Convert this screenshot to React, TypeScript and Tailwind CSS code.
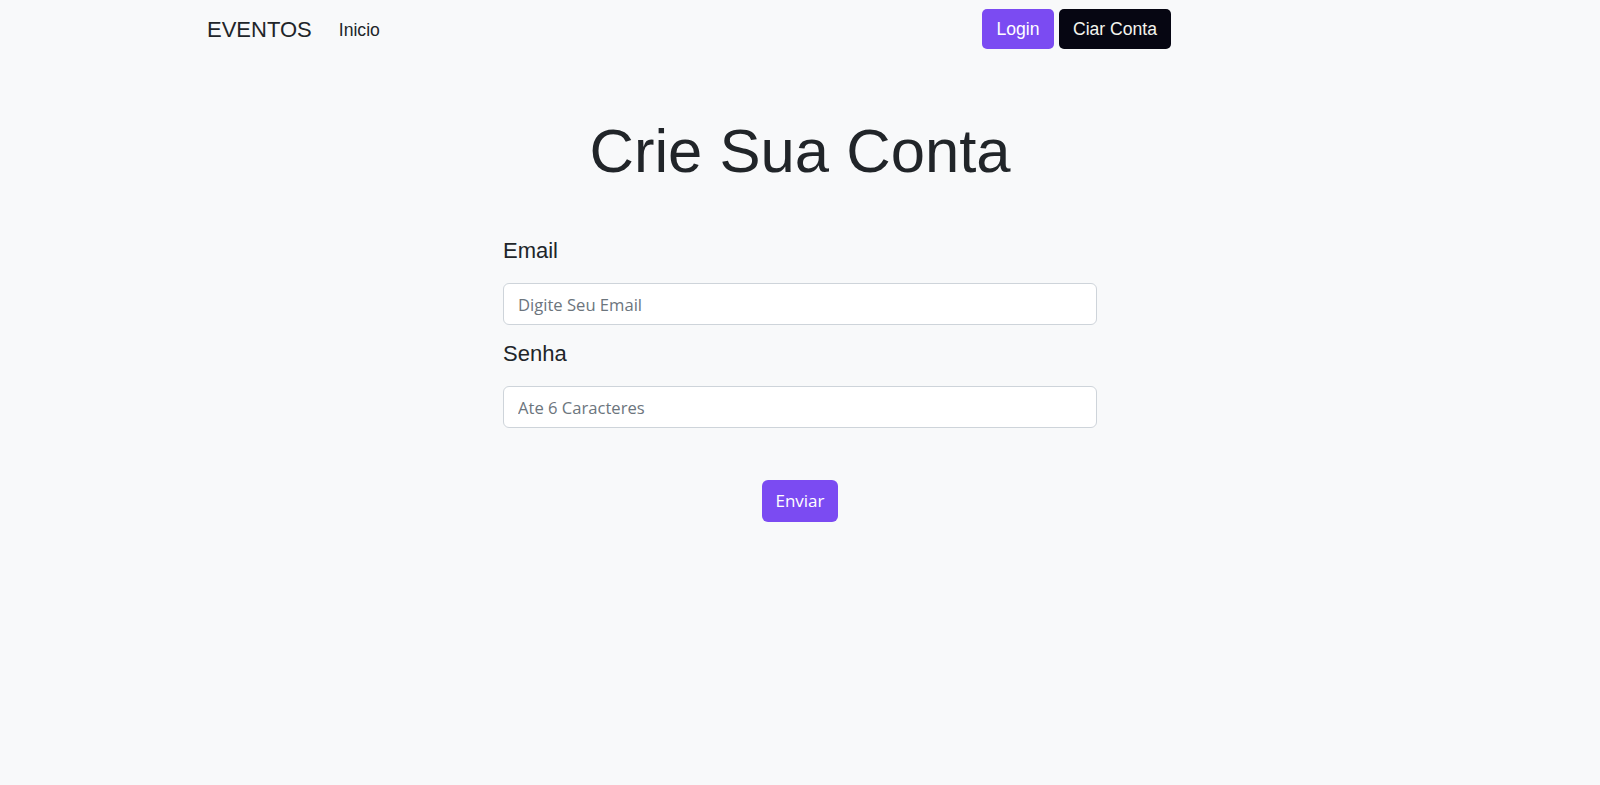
import { useState } from 'react'

const arial = { fontFamily: '"Liberation Sans", Arial, sans-serif' }

function Navbar() {
  return (
    <nav className="h-[58px] flex items-center" style={arial}>
      <div className="ml-[207px] w-[964px] flex items-center justify-between">
        <div className="flex items-center">
          <a href="#" className="text-[22px] leading-[33px] text-[#212529]">
            EVENTOS
          </a>
          <a href="#" className="ml-[27px] mt-[2px] text-[17.6px] leading-[26px] text-[#212529]">
            Inicio
          </a>
        </div>
        <div className="flex items-center gap-[5px]">
          <button className="w-[72px] h-[40px] rounded-[5px] bg-[#7b4bf2] text-white text-[17.6px]">
            Login
          </button>
          <button className="w-[112px] h-[40px] rounded-[5px] bg-[#060612] text-[#f4f4ee] text-[17.6px]">
            Ciar Conta
          </button>
        </div>
      </div>
    </nav>
  )
}

function Field({
  label,
  placeholder,
  type,
  value,
  onChange,
  first,
}: {
  label: string
  placeholder: string
  type: string
  value: string
  onChange: (v: string) => void
  first?: boolean
}) {
  return (
    <div className={first ? '' : 'mt-[12px]'}>
      <label className="block text-[22px] leading-[33px] text-[#212529]" style={arial}>
        {label}
      </label>
      <input
        type={type}
        value={value}
        onChange={(e) => onChange(e.target.value)}
        placeholder={placeholder}
        className="mt-[16px] block w-full h-[42px] px-[14px] rounded-[6px] border border-[#ced4da] bg-white text-[16.6px] text-[#212529] placeholder:text-[#6c757d] outline-none"
        style={{ fontFamily: '"Segoe UI", "Open Sans", sans-serif' }}
      />
    </div>
  )
}

export default function App() {
  const [email, setEmail] = useState('')
  const [senha, setSenha] = useState('')

  return (
    <div className="min-h-screen bg-[#f8f9fa]">
      <Navbar />
      <main>
        <h1
          className="mt-[56px] text-center text-[61.6px] leading-[74px] text-[#212529]"
          style={arial}
        >
          Crie Sua Conta
        </h1>
        <form className="w-[594px] mx-auto mt-[46px]" onSubmit={(e) => e.preventDefault()}>
          <Field
            first
            label="Email"
            type="email"
            placeholder="Digite Seu Email"
            value={email}
            onChange={setEmail}
          />
          <Field
            label="Senha"
            type="password"
            placeholder="Ate 6 Caracteres"
            value={senha}
            onChange={setSenha}
          />
          <div className="flex justify-center mt-[52px]">
            <button
              type="submit"
              className="w-[76px] h-[42px] rounded-[6px] bg-[#7b4bf2] text-white text-[17px]"
              style={{ fontFamily: '"Segoe UI", "Open Sans", sans-serif' }}
            >
              Enviar
            </button>
          </div>
        </form>
      </main>
    </div>
  )
}
